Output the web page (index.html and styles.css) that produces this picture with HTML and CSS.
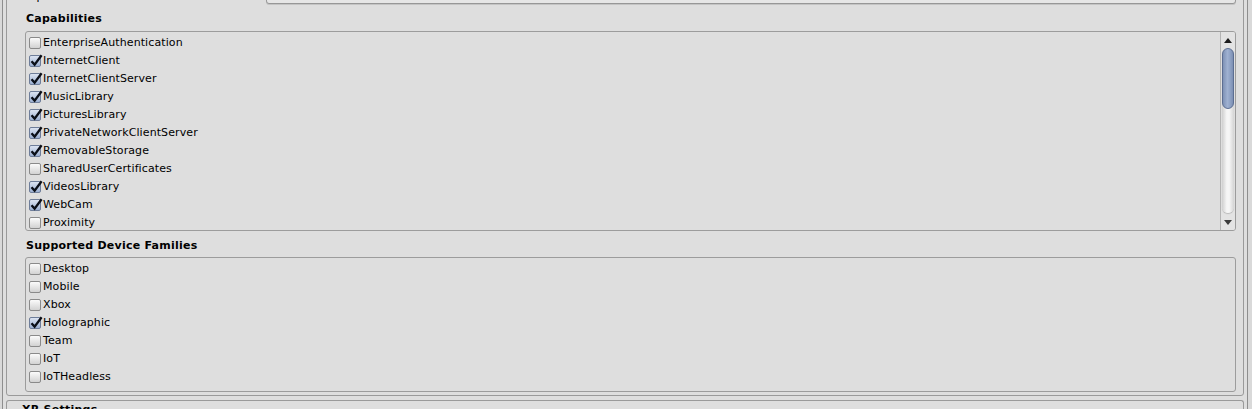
FILE: index.html
```html
<!DOCTYPE html>
<html>
<head>
<meta charset="utf-8">
<link rel="stylesheet" href="styles.css">
</head>
<body>
<div class="window">
  <div class="panel">
    <div class="input-row">
      <span class="input-label">Input Source</span>
      <div class="field"></div>
    </div>
    <div class="section-title">Capabilities</div>
    <div class="listbox caps">
      <div class="list">
        <div class="item"><span class="cb"></span><span class="txt">EnterpriseAuthentication</span></div>
        <div class="item"><span class="cb on"><svg class="tick" viewBox="0 0 14 14"><path d="M2.5 7.2 L5.6 10.6 L12.6 1.2"/></svg></span><span class="txt">InternetClient</span></div>
        <div class="item"><span class="cb on"><svg class="tick" viewBox="0 0 14 14"><path d="M2.5 7.2 L5.6 10.6 L12.6 1.2"/></svg></span><span class="txt">InternetClientServer</span></div>
        <div class="item"><span class="cb on"><svg class="tick" viewBox="0 0 14 14"><path d="M2.5 7.2 L5.6 10.6 L12.6 1.2"/></svg></span><span class="txt">MusicLibrary</span></div>
        <div class="item"><span class="cb on"><svg class="tick" viewBox="0 0 14 14"><path d="M2.5 7.2 L5.6 10.6 L12.6 1.2"/></svg></span><span class="txt">PicturesLibrary</span></div>
        <div class="item"><span class="cb on"><svg class="tick" viewBox="0 0 14 14"><path d="M2.5 7.2 L5.6 10.6 L12.6 1.2"/></svg></span><span class="txt">PrivateNetworkClientServer</span></div>
        <div class="item"><span class="cb on"><svg class="tick" viewBox="0 0 14 14"><path d="M2.5 7.2 L5.6 10.6 L12.6 1.2"/></svg></span><span class="txt">RemovableStorage</span></div>
        <div class="item"><span class="cb"></span><span class="txt">SharedUserCertificates</span></div>
        <div class="item"><span class="cb on"><svg class="tick" viewBox="0 0 14 14"><path d="M2.5 7.2 L5.6 10.6 L12.6 1.2"/></svg></span><span class="txt">VideosLibrary</span></div>
        <div class="item"><span class="cb on"><svg class="tick" viewBox="0 0 14 14"><path d="M2.5 7.2 L5.6 10.6 L12.6 1.2"/></svg></span><span class="txt">WebCam</span></div>
        <div class="item"><span class="cb"></span><span class="txt">Proximity</span></div>
      </div>
      <div class="scrollbar">
        <div class="sb-btn"><span class="arrow-up"></span></div>
        <div class="sb-track"><div class="sb-thumb"></div></div>
        <div class="sb-btn down"><span class="arrow-down"></span></div>
      </div>
    </div>
    <div class="section-title second">Supported Device Families</div>
    <div class="listbox fam">
      <div class="list">
        <div class="item"><span class="cb"></span><span class="txt">Desktop</span></div>
        <div class="item"><span class="cb"></span><span class="txt">Mobile</span></div>
        <div class="item"><span class="cb"></span><span class="txt">Xbox</span></div>
        <div class="item"><span class="cb on"><svg class="tick" viewBox="0 0 14 14"><path d="M2.5 7.2 L5.6 10.6 L12.6 1.2"/></svg></span><span class="txt">Holographic</span></div>
        <div class="item"><span class="cb"></span><span class="txt">Team</span></div>
        <div class="item"><span class="cb"></span><span class="txt">IoT</span></div>
        <div class="item"><span class="cb"></span><span class="txt">IoTHeadless</span></div>
      </div>
    </div>
  </div>
  <div class="panel next">
    <div class="panel-title">XR Settings</div>
  </div>
</div>
</body>
</html>
```

FILE: styles.css
```css
html, body {
  margin: 0;
  padding: 0;
}
body {
  width: 1252px;
  height: 409px;
  overflow: hidden;
  background: #d9d9d9;
  font-family: "DejaVu Sans", "Liberation Sans", sans-serif;
  font-size: 11px;
  color: #000;
}
.window {
  margin-left: 2px;
  width: 1244px;
  height: 409px;
  border-left: 1px solid #8e8e8e;
  border-right: 1px solid #8e8e8e;
  background: #dedede;
  display: flex;
  flex-direction: column;
}
.panel {
  margin: -21px 3px 0 3px;
  border: 1px solid #9a9a9a;
  border-radius: 0 0 3px 3px;
  padding: 0 7px 3px 18px;
  display: flex;
  flex-direction: column;
}
.input-row {
  height: 24px;
  display: flex;
  align-items: flex-end;
}
.input-label {
  width: 241px;
  line-height: 16px;
  padding-left: 1px;
  margin-bottom: -1px;
  box-sizing: border-box;
  letter-spacing: 0.1px;
}
.field {
  flex: 1;
  height: 16px;
  box-sizing: border-box;
  border: 1px solid #979797;
  border-radius: 3px;
  background: #e6e6e6;
  box-shadow: 0 1px 0 #c4c4c4;
}
.section-title {
  font-weight: bold;
  line-height: 16px;
  margin: 7px 0 4px 1px;
  letter-spacing: 0.25px;
}
.section-title.second {
  margin-top: 7px;
  margin-bottom: 3px;
}
.listbox {
  border: 1px solid #9c9c9c;
  border-radius: 3px;
  display: flex;
  overflow: hidden;
  box-sizing: border-box;
}
.listbox.caps {
  height: 200px;
}
.listbox.fam {
  height: 135px;
}
.list {
  flex: 1;
  padding: 2px 0 0 3px;
}
.item {
  height: 18px;
  display: flex;
  align-items: center;
}
.txt {
  line-height: 18px;
  margin-left: 2px;
  white-space: nowrap;
  letter-spacing: 0.1px;
}
.cb {
  position: relative;
  width: 12px;
  height: 12px;
  box-sizing: border-box;
  border: 1px solid #8a8a8a;
  border-radius: 2px;
  background: linear-gradient(#fbfbfb, #d2d2d2);
  flex: none;
}
.cb.on {
  border-color: #6e7d99;
  background: linear-gradient(#dbe3f1, #9cb0d2);
}
.tick {
  position: absolute;
  left: -1px;
  top: -2px;
  width: 14px;
  height: 14px;
  overflow: visible;
}
.tick path {
  fill: none;
  stroke: #0b0f18;
  stroke-width: 2.3;
  stroke-linecap: butt;
  stroke-linejoin: miter;
}
.scrollbar {
  width: 14px;
  border-left: 1px solid #b4b4b4;
  background: #e3e3e3;
  display: flex;
  flex-direction: column;
  flex: none;
}
.sb-btn {
  height: 15px;
  display: flex;
  align-items: center;
  justify-content: center;
  flex: none;
}
.sb-btn.down {
  height: 17px;
}
.arrow-up {
  width: 0;
  height: 0;
  border-left: 4px solid transparent;
  border-right: 4px solid transparent;
  border-bottom: 5px solid #1c1c1c;
  margin-top: 1px;
}
.arrow-down {
  width: 0;
  height: 0;
  border-left: 4px solid transparent;
  border-right: 4px solid transparent;
  border-top: 5px solid #3a3a3a;
  margin-top: 2px;
}
.sb-track {
  flex: 1;
  margin: 1px 1px 0 1px;
  border-radius: 6px;
  background: linear-gradient(to right, #cfcfcf, #f6f6f6 40%, #f6f6f6 60%, #d4d4d4);
  box-shadow: 0 1px 1px #b8b8b8;
}
.sb-thumb {
  height: 61px;
  box-sizing: border-box;
  border: 1px solid #5c6e92;
  border-radius: 6px;
  background: linear-gradient(to right, #7e92b6, #9fb1d1 45%, #93a6c8 65%, #7c8fb3);
}
.panel.next {
  margin-top: 4px;
  border-radius: 3px 3px 0 0;
  border-bottom: none;
  padding: 1px 0 0 15px;
  flex: 1;
}
.panel-title {
  font-weight: bold;
  line-height: 16px;
  letter-spacing: 0.25px;
}
```
